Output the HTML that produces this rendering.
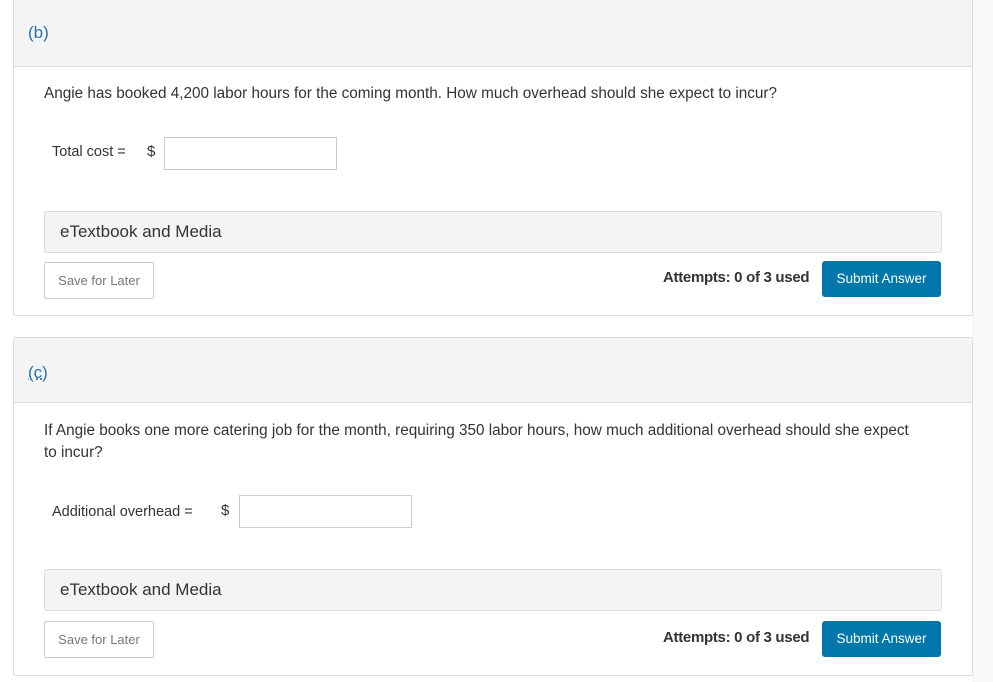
<!DOCTYPE html>
<html><head><style>
body{margin:0;width:993px;height:682px;background:#fff;font-family:"Liberation Sans",sans-serif;position:relative;overflow:hidden;color:#333}
.a{position:absolute}
.panel{position:absolute;left:13px;width:958px;border:1px solid #ddd;border-radius:3px;background:#fff}
.hd{position:absolute;left:0;right:0;top:0;background:#f4f4f4;border-bottom:1px solid #ddd}
.lbl{color:#2a6fb0;font-size:17px}
.q{font-size:15.3px;color:#333;line-height:22px}
.inp{position:absolute;border:1px solid #ccc;height:31px;background:#fff}
.et{position:absolute;left:30px;width:896px;height:40px;background:#f4f4f4;border:1px solid #ddd;border-radius:3px;font-size:17px;line-height:40px;text-indent:15px;color:#333}
.save{position:absolute;left:30px;width:108px;height:35px;border:1px solid #ccc;border-radius:2px;font-size:13px;color:#777;text-align:center;line-height:35px}
.att{position:absolute;font-size:15px;font-weight:bold;color:#333;letter-spacing:-0.3px}
.sub{position:absolute;left:808px;width:119px;height:36px;background:#0077aa;border-radius:3px;color:#fff;font-size:13.5px;text-align:center;line-height:36px}
</style></head><body>
<div class="a" style="left:972px;top:0;width:21px;height:682px;background:#f8f8f8"></div>
<div class="panel" style="top:-2px;height:316px">
 <div class="hd" style="height:67px"></div>
 <div class="a lbl" style="left:14px;top:24px">(b)</div>
 <div class="a q" style="left:30px;top:84px;white-space:nowrap">Angie has booked 4,200 labor hours for the coming month. How much overhead should she expect to incur?</div>
 <div class="a" style="left:38px;top:145px;font-size:14.5px">Total cost =</div>
 <div class="a" style="left:133px;top:144px;font-size:15px">$</div>
 <div class="inp" style="left:150px;top:138px;width:171px"></div>
 <div class="et" style="top:212px">eTextbook and Media</div>
 <div class="save" style="top:263px">Save for Later</div>
 <div class="att" style="left:649px;top:270px">Attempts: 0 of 3 used</div>
 <div class="sub" style="top:262px">Submit Answer</div>
</div>
<div class="panel" style="top:337px;height:337px">
 <div class="hd" style="height:64px"></div>
 <div class="a lbl" style="left:14px;top:25px;text-decoration:underline dotted">(c)</div>
 <div class="a q" style="left:30px;top:82px;width:880px">If Angie books one more catering job for the month, requiring 350 labor hours, how much additional overhead should she expect to incur?</div>
 <div class="a" style="left:38px;top:166px;font-size:14.5px">Additional overhead =</div>
 <div class="a" style="left:207px;top:164px;font-size:15px">$</div>
 <div class="inp" style="left:225px;top:157px;width:171px"></div>
 <div class="et" style="top:231px">eTextbook and Media</div>
 <div class="save" style="top:283px">Save for Later</div>
 <div class="att" style="left:649px;top:291px">Attempts: 0 of 3 used</div>
 <div class="sub" style="top:283px">Submit Answer</div>
</div>
</body></html>
